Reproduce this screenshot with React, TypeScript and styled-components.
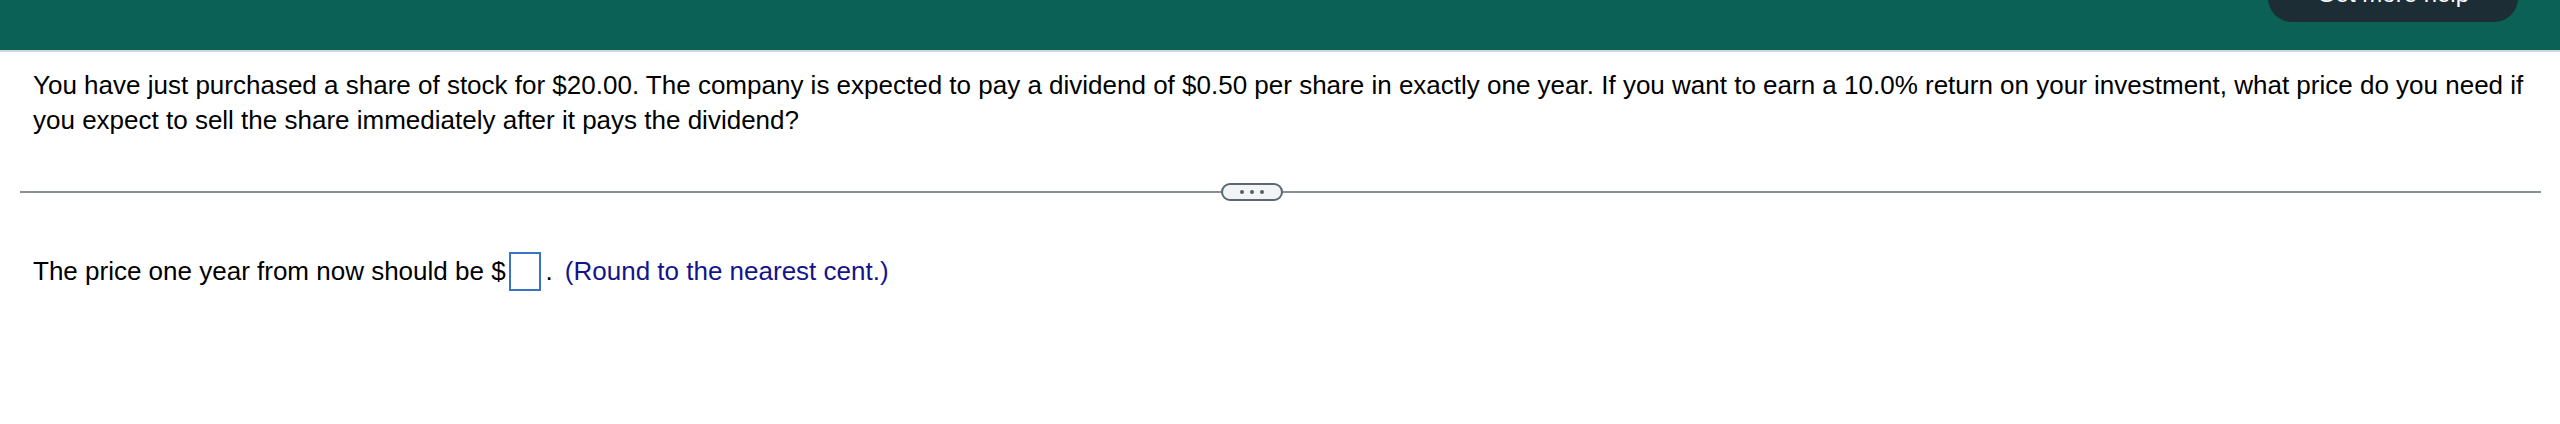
import React from 'react'
import styled, { createGlobalStyle } from 'styled-components'

const GlobalStyle = createGlobalStyle`
  html, body {
    margin: 0;
    padding: 0;
    background: #ffffff;
    font-family: 'Liberation Sans', Arial, sans-serif;
    color: #000000;
  }
  * {
    box-sizing: border-box;
  }
`

const Header = styled.header`
  height: 52px;
  background-color: #0c6157;
  border-bottom: 2px solid #cfd6dc;
  display: flex;
  justify-content: flex-end;
  padding-right: 42px;
  overflow: hidden;
`

const HelpPill = styled.div`
  margin-top: -40px;
  width: 250px;
  height: 62px;
  padding-top: 21px;
  background-color: #1c2d36;
  border-radius: 24px;
  color: #ffffff;
  font-size: 24px;
  line-height: 26px;
  display: flex;
  justify-content: center;
`

const Content = styled.main`
  padding: 16px 19px 0 20px;
`

const Question = styled.p`
  margin: 0;
  padding: 0 13px;
  font-size: 26px;
  line-height: 35px;
`

const Divider = styled.div`
  position: relative;
  height: 2px;
  margin-top: 53px;
  background-color: #878f9b;
`

const MorePill = styled.button`
  position: absolute;
  top: -8px;
  left: calc(50% - 59.5px);
  width: 62px;
  height: 18px;
  padding: 0;
  border: 2px solid #5b6774;
  border-radius: 9px;
  background-color: #f3f4f6;
  display: flex;
  align-items: center;
  justify-content: center;
  gap: 6px;
  cursor: pointer;
`

const Dot = styled.span`
  width: 4px;
  height: 4px;
  border-radius: 50%;
  background-color: #555f6b;
`

const AnswerRow = styled.div`
  margin-top: 59px;
  padding: 0 13px;
  display: flex;
  align-items: center;
  font-size: 26px;
  line-height: 35px;
  white-space: pre;
`

const AnswerBox = styled.span`
  display: inline-block;
  width: 32px;
  height: 39px;
  margin: 0 5px 0 3px;
  border: 2px solid #3b73c9;
  background: #ffffff;
`

const Hint = styled.span`
  margin-left: 12px;
  color: #14148a;
`

export default function App() {
  return (
    <>
      <GlobalStyle />
      <Header>
        <HelpPill>
          <span>Get more help</span>
        </HelpPill>
      </Header>
      <Content>
        <Question>
          You have just purchased a share of stock for $20.00. The company is expected to pay a
          dividend of $0.50 per share in exactly one year. If you want to earn a 10.0% return on
          your investment, what price do you need if you expect to sell the share immediately
          after it pays the dividend?
        </Question>
        <Divider>
          <MorePill aria-label="more">
            <Dot />
            <Dot />
            <Dot />
          </MorePill>
        </Divider>
        <AnswerRow>
          <span>The price one year from now should be $</span>
          <AnswerBox />
          <span>.</span>
          <Hint>(Round to the nearest cent.)</Hint>
        </AnswerRow>
      </Content>
    </>
  )
}
